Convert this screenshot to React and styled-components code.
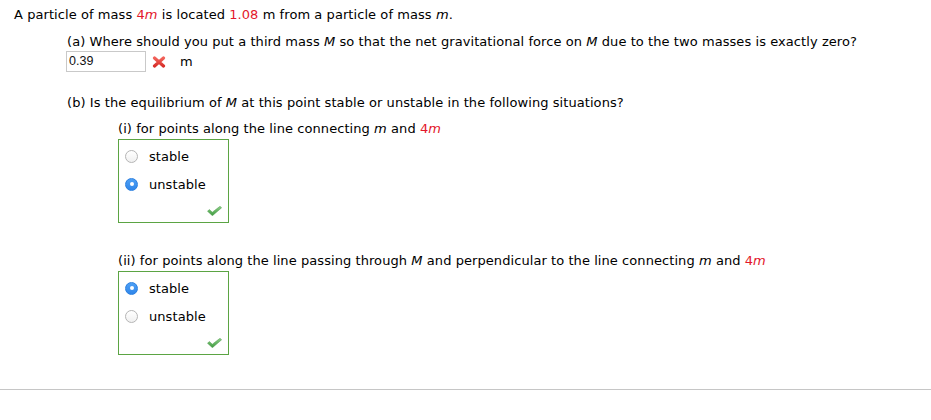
import React from "react";
import styled, { createGlobalStyle } from "styled-components";

const Global = createGlobalStyle`
  html, body { margin: 0; padding: 0; background: #fff; }
  body { font-family: "DejaVu Sans", Verdana, sans-serif; font-size: 13px; color: #000; letter-spacing: 0.07px; }
`;

const Page = styled.div`
  width: 931px;
  height: 420px;
  display: flex;
  flex-direction: column;
`;

const Content = styled.div`
  padding: 7px 0 0 14px;
  height: 389px;
  box-sizing: border-box;
`;

const Line = styled.div`
  line-height: 16px;
  white-space: nowrap;
  margin-left: ${(p) => p.$indent || 0}px;
  margin-top: ${(p) => p.$top || 0}px;
`;

const Red = styled.span`
  color: #e3172b;
`;

const Var = styled.i`
  font-style: italic;
`;

const AnswerRow = styled.div`
  display: flex;
  align-items: center;
  margin: 1px 0 0 52px;
  height: 21px;
`;

const Input = styled.div`
  width: 80px;
  height: 21px;
  box-sizing: border-box;
  border: 1px solid #c9c9c9;
  font-family: "Liberation Sans", Arial, sans-serif;
  font-size: 12.5px;
  letter-spacing: 0;
  line-height: 19px;
  padding-left: 2px;
  color: #111;
`;

const Unit = styled.span`
  margin-left: 14px;
`;

const Choices = styled.div`
  margin: 2px 0 0 104px;
  width: 111px;
  box-sizing: border-box;
  border: 1px solid #5ba443;
  padding: 2px 6px 6px 6px;
`;

const Option = styled.label`
  display: flex;
  align-items: center;
  height: 28px;
`;

const Radio = styled.span`
  width: 13px;
  height: 13px;
  box-sizing: border-box;
  border-radius: 50%;
  margin-right: 11px;
  flex-shrink: 0;
  display: flex;
  align-items: center;
  justify-content: center;
  ${(p) =>
    p.$checked
      ? `background: linear-gradient(#4ea0f5, #2f86ea); border: 1px solid #2b7fe0;`
      : `background: linear-gradient(#fff, #f0f0f0); border: 1px solid #b5b5b5;`}
`;

const Dot = styled.span`
  width: 4px;
  height: 4px;
  border-radius: 50%;
  background: #fff;
`;

const CheckRow = styled.div`
  display: flex;
  justify-content: flex-end;
  padding-top: 8px;
  height: 10px;
`;

const Rule = styled.div`
  height: 1px;
  background: #c6c6c6;
  width: 100%;
`;

const RedX = () => (
  <svg width="14" height="12" viewBox="0 0 14 12" style={{ marginLeft: 6 }}>
    <defs>
      <linearGradient id="xg" x1="0" y1="0" x2="0" y2="1">
        <stop offset="0" stopColor="#f2625a" />
        <stop offset="1" stopColor="#d8302a" />
      </linearGradient>
    </defs>
    <path d="M2.5 2 L11.5 10 M11.5 2 L2.5 10" stroke="url(#xg)" strokeWidth="3.2" strokeLinecap="round" />
  </svg>
);

const Check = () => (
  <svg width="15" height="10" viewBox="0 0 15 10">
    <defs>
      <linearGradient id="cg" x1="0" y1="0" x2="0" y2="1">
        <stop offset="0" stopColor="#8fd08a" />
        <stop offset="1" stopColor="#3e9a3e" />
      </linearGradient>
    </defs>
    <path d="M0.5 5.2 L2.4 3.6 L5.3 6.2 L13 0.3 L14.6 1.8 L5.4 9.7 Z" fill="url(#cg)" stroke="#4a9a48" strokeWidth="0.5" strokeLinejoin="round" />
  </svg>
);

const Choice = ({ label, checked }) => (
  <Option>
    <Radio $checked={checked}>{checked && <Dot />}</Radio>
    {label}
  </Option>
);

const ChoiceBox = ({ selected }) => (
  <Choices>
    <Choice label="stable" checked={selected === "stable"} />
    <Choice label="unstable" checked={selected === "unstable"} />
    <CheckRow>
      <Check />
    </CheckRow>
  </Choices>
);

export default function App() {
  return (
    <Page>
      <Global />
      <Content>
        <Line>
          A particle of mass <Red>4<Var>m</Var></Red> is located <Red>1.08</Red> m from a particle of mass <Var>m</Var>.
        </Line>
        <Line $indent={53} $top={11}>
          (a) Where should you put a third mass <Var>M</Var> so that the net gravitational force on <Var>M</Var> due to the two masses is exactly zero?
        </Line>
        <AnswerRow>
          <Input>0.39</Input>
          <RedX />
          <Unit>m</Unit>
        </AnswerRow>
        <Line $indent={53} $top={23}>
          (b) Is the equilibrium of <Var>M</Var> at this point stable or unstable in the following situations?
        </Line>
        <Line $indent={104} $top={10}>
          (i) for points along the line connecting <Var>m</Var> and <Red>4<Var>m</Var></Red>
        </Line>
        <ChoiceBox selected="unstable" />
        <Line $indent={104} $top={30}>
          (ii) for points along the line passing through <Var>M</Var> and perpendicular to the line connecting <Var>m</Var> and <Red>4<Var>m</Var></Red>
        </Line>
        <ChoiceBox selected="stable" />
      </Content>
      <Rule />
    </Page>
  );
}
